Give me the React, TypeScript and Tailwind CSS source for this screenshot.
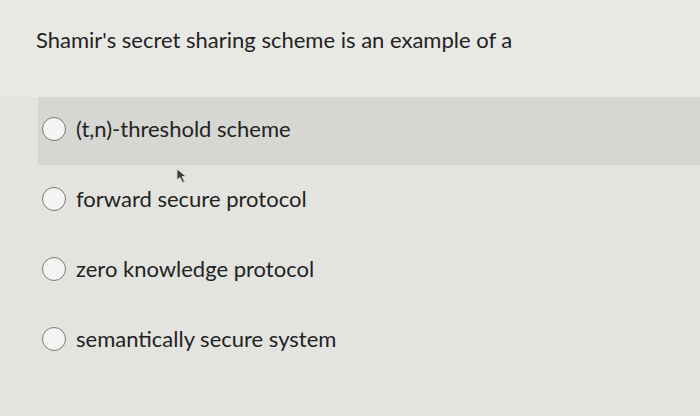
const options = [
  '(t,n)-threshold scheme',
  'forward secure protocol',
  'zero knowledge protocol',
  'semantically secure system',
];

function Radio() {
  return (
    <span className="w-[24px] h-[24px] rounded-full border-[1.5px] border-[#777775] bg-[#f4f4f2] shrink-0" />
  );
}

export default function App() {
  return (
    <div
      className="relative w-[700px] h-[416px] overflow-hidden bg-[#e3e3df] text-[#232323]"
      style={{ fontFamily: 'Lato, "Open Sans", sans-serif' }}
    >
      <div className="h-[97px] bg-[#e8e8e4] pl-[36px] pt-[25px]">
        <p className="text-[22px] leading-[30px]">Shamir's secret sharing scheme is an example of a</p>
      </div>

      <div className="pl-[38px]">
        {options.map((label, i) => (
          <div
            key={label}
            className={`flex items-center gap-[10px] pl-[4px] pb-[3px] ${i === 0 ? 'bg-[#d6d6d2] h-[68px] pb-[5px]' : 'h-[70px]'}`}
          >
            <Radio />
            <span className="text-[22px] leading-[30px]">{label}</span>
          </div>
        ))}
      </div>

      {/* mouse cursor */}
      <svg className="absolute left-[176px] top-[168px]" width="12" height="16" viewBox="0 0 12 16">
        <path d="M1 1 L1 12 L4 9.5 L6.5 14.5 L8.5 13.5 L6 8.5 L10 8.5 Z" fill="#3a3a3a" stroke="#cfcfcb" strokeWidth="1" />
      </svg>
    </div>
  );
}
